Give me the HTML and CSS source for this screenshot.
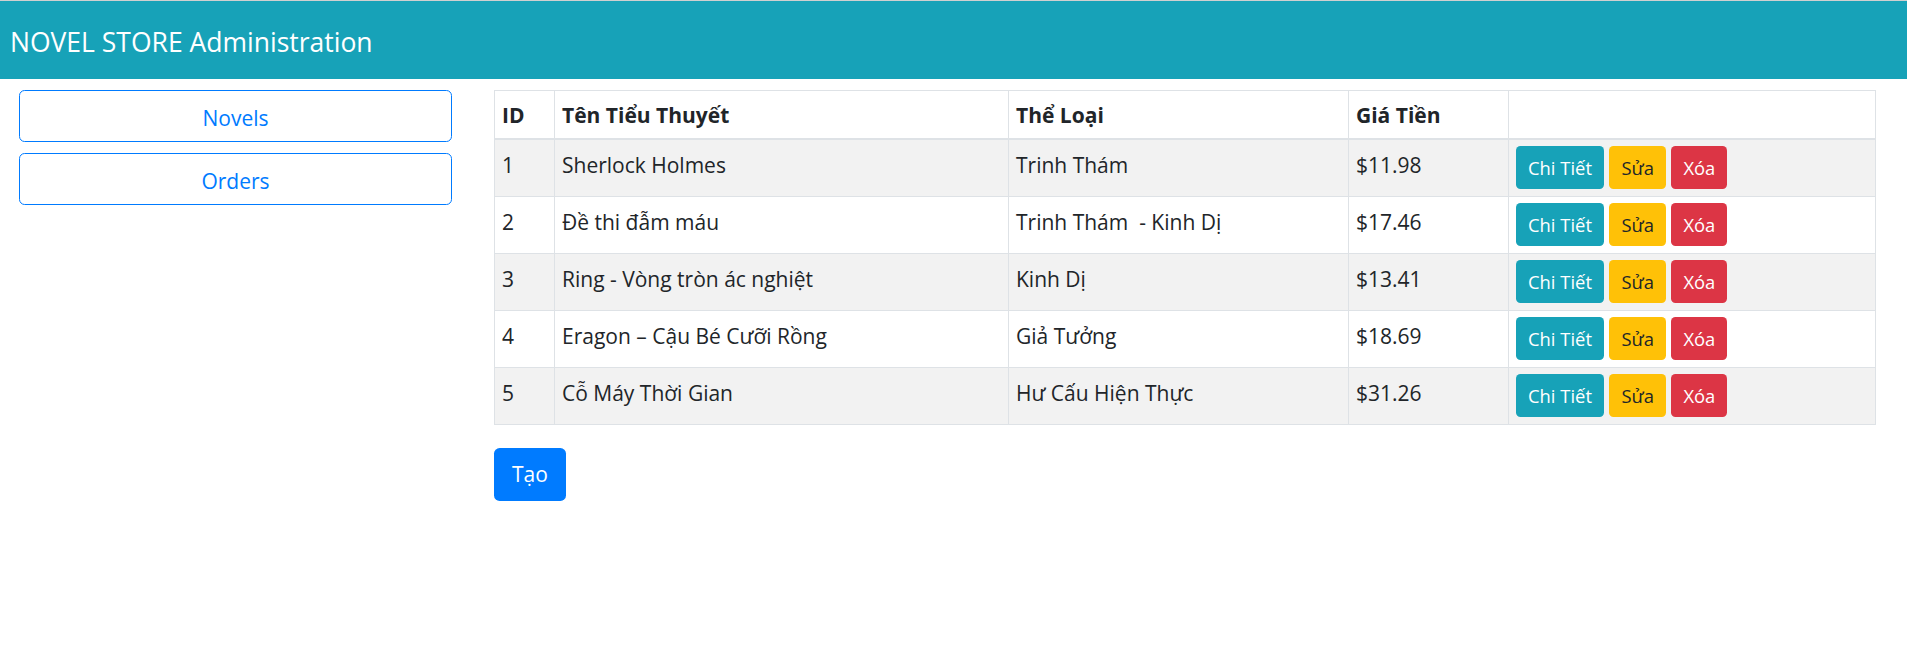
FILE: index.html
```html
<!DOCTYPE html>
<html>
<head>
    <meta charset="utf-8">
    <title>Novel Store Administration</title>
    <link rel="stylesheet" href="styles.css">
</head>
<body>

<div class="topbar">NOVEL STORE Administration</div>

<div class="layout">
  <div class="sidebar">
    <a class="side-link" href="#">Novels</a>
    <a class="side-link" href="#">Orders</a>
  </div>

  <div class="main">
    <table class="novels">
      <colgroup>
        <col class="c-id">
        <col class="c-name">
        <col class="c-genre">
        <col class="c-price">
        <col class="c-actions">
      </colgroup>
      <thead>
        <tr>
          <th>ID</th>
          <th>Tên Tiểu Thuyết</th>
          <th>Thể Loại</th>
          <th>Giá Tiền</th>
          <th></th>
        </tr>
      </thead>
      <tbody>
        <tr>
          <td>1</td>
          <td>Sherlock Holmes</td>
          <td>Trinh Thám</td>
          <td>$11.98</td>
          <td class="actions"><a class="btn btn-info" href="#">Chi Tiết</a> <a class="btn btn-warning" href="#">Sửa</a> <a class="btn btn-danger" href="#">Xóa</a></td>
        </tr>
        <tr>
          <td>2</td>
          <td>Đề thi đẫm máu</td>
          <td>Trinh Thám&nbsp; - Kinh Dị</td>
          <td>$17.46</td>
          <td class="actions"><a class="btn btn-info" href="#">Chi Tiết</a> <a class="btn btn-warning" href="#">Sửa</a> <a class="btn btn-danger" href="#">Xóa</a></td>
        </tr>
        <tr>
          <td>3</td>
          <td>Ring - Vòng tròn ác nghiệt</td>
          <td>Kinh Dị</td>
          <td>$13.41</td>
          <td class="actions"><a class="btn btn-info" href="#">Chi Tiết</a> <a class="btn btn-warning" href="#">Sửa</a> <a class="btn btn-danger" href="#">Xóa</a></td>
        </tr>
        <tr>
          <td>4</td>
          <td>Eragon – Cậu Bé Cưỡi Rồng</td>
          <td>Giả Tưởng</td>
          <td>$18.69</td>
          <td class="actions"><a class="btn btn-info" href="#">Chi Tiết</a> <a class="btn btn-warning" href="#">Sửa</a> <a class="btn btn-danger" href="#">Xóa</a></td>
        </tr>
        <tr>
          <td>5</td>
          <td>Cỗ Máy Thời Gian</td>
          <td>Hư Cấu Hiện Thực</td>
          <td>$31.26</td>
          <td class="actions"><a class="btn btn-info" href="#">Chi Tiết</a> <a class="btn btn-warning" href="#">Sửa</a> <a class="btn btn-danger" href="#">Xóa</a></td>
        </tr>
      </tbody>
    </table>

    <a class="btn-create" href="#">Tạo</a>
  </div>
</div>

</body>
</html>
```

FILE: styles.css
```css
* {
  margin: 0px;
  padding: 0px;
  box-sizing: border-box;
}
body {
  font-family: "Open Sans", "Noto Sans", sans-serif;
  font-size: 21px;
  line-height: 33.6px;
  color: #212529;
  background-color: white;
}
a {
  text-decoration: none;
}
.topbar {
  height: 79px;
  border-top: 1px solid #d0d0d0;
  background-color: #17a2b8;
  color: white;
  font-size: 26.5px;
  line-height: 42px;
  padding: 19.5px 10px 0;
}
.layout {
  display: flex;
  gap: 42px;
  padding: 11px 0 0 19px;
}
.sidebar {
  display: flex;
  flex-direction: column;
  gap: 11px;
  width: 433px;
}
.side-link {
  display: block;
  height: 52px;
  padding: 10.8px 16px 6px;
  border: 1px solid #007bff;
  border-radius: 5.6px;
  color: #007bff;
  text-align: center;
}
.main {
  width: 1381px;
}
.novels {
  width: 100%;
  table-layout: fixed;
  border-collapse: collapse;
  margin-bottom: 23px;
}
.c-id { width: 60px; }
.c-name { width: 454px; }
.c-genre { width: 340px; }
.c-price { width: 160px; }
.c-actions { width: 367px; }
.novels th,
.novels td {
  border: 1px solid #dee2e6;
  padding: 9.5px 7px 3.5px;
  text-align: left;
  vertical-align: top;
  white-space: nowrap;
}
.novels td.actions {
  padding: 6.5px 7px;
}
.novels th {
  font-weight: bold;
  border-bottom-width: 2px;
  padding: 7.5px 7px 5.5px;
}
.novels tbody tr:nth-child(odd) {
  background-color: #f2f2f2;
}
.btn {
  display: inline-block;
  height: 43px;
  padding: 5.8px 11px 3.4px;
  border: 1px solid transparent;
  border-radius: 4.5px;
  font-size: 18.4px;
  line-height: 29.4px;
  vertical-align: top;
}
.btn-info {
  background-color: #17a2b8;
  color: white;
}
.btn-warning {
  background-color: #ffc107;
  color: #212529;
}
.btn-danger {
  background-color: #dc3545;
  color: white;
}
.btn-create {
  display: inline-block;
  height: 53px;
  padding: 10.8px 18px 6px;
  border-radius: 5.6px;
  background-color: #007bff;
  color: white;
}
```
